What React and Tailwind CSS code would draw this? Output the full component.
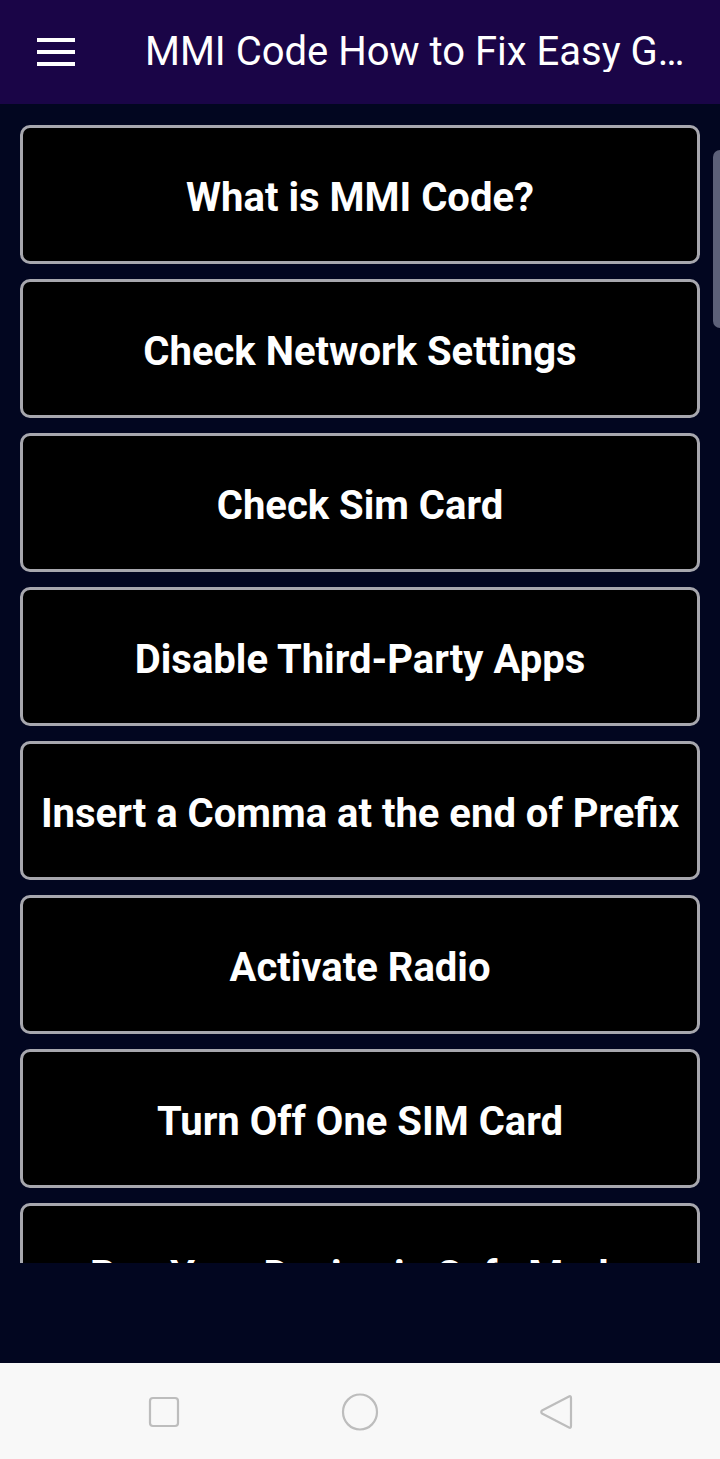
const items = [
  'What is MMI Code?',
  'Check Network Settings',
  'Check Sim Card',
  'Disable Third-Party Apps',
  'Insert a Comma at the end of Prefix',
  'Activate Radio',
  'Turn Off One SIM Card',
  'Run Your Device in Safe Mode',
];

export default function App() {
  return (
    <div className="w-[720px] h-[1459px] flex flex-col bg-[#020620] font-['Roboto',sans-serif] overflow-hidden">
      {/* App bar */}
      <header className="h-[104px] shrink-0 bg-[#1a0547] flex items-center">
        <button className="ml-[37px] w-[38px] flex flex-col gap-[8px]">
          <span className="block h-[4px] bg-white" />
          <span className="block h-[4px] bg-white" />
          <span className="block h-[4px] bg-white" />
        </button>
        <h1 className="ml-[70px] w-[546px] truncate text-white text-[40px] leading-none">
          MMI Code How to Fix Easy Guide
        </h1>
      </header>

      {/* List */}
      <div className="relative h-[1159px] shrink-0 overflow-hidden">
        <div className="flex flex-col gap-[15px] pt-[21px] px-[20px]">
          {items.map((item) => (
            <div
              key={item}
              className="h-[139px] shrink-0 rounded-[10px] border-[3px] border-[#a7a7ae] bg-black flex items-center justify-center"
            >
              <span className="mt-[6px] text-white font-bold text-[40px] leading-none whitespace-nowrap">{item}</span>
            </div>
          ))}
        </div>
        <div className="absolute right-0 top-[46px] w-[7px] h-[178px] rounded-l-full bg-[#5c6078]" />
      </div>

      <div className="flex-1" />

      {/* Nav bar */}
      <nav className="h-[96px] shrink-0 bg-[#f8f8f8] flex items-center">
        <div className="w-[720px] relative h-full">
          <svg className="absolute left-[148px] top-[33px]" width="32" height="32" viewBox="0 0 32 32">
            <rect x="2" y="2" width="28" height="28" rx="3" fill="none" stroke="#bdbdbd" strokeWidth="2.2" />
          </svg>
          <svg className="absolute left-[341px] top-[30px]" width="38" height="38" viewBox="0 0 38 38">
            <ellipse cx="19" cy="19" rx="17" ry="17.5" fill="none" stroke="#bdbdbd" strokeWidth="2.2" />
          </svg>
          <svg className="absolute left-[538px] top-[30px]" width="36" height="38" viewBox="0 0 36 38">
            <path d="M31 3.5 Q33 2.5 33 5 V33 Q33 35.5 31 34.5 L4 20.5 Q2.5 19 4 17.5 Z" fill="none" stroke="#bdbdbd" strokeWidth="2.2" strokeLinejoin="round" />
          </svg>
        </div>
      </nav>
    </div>
  );
}
